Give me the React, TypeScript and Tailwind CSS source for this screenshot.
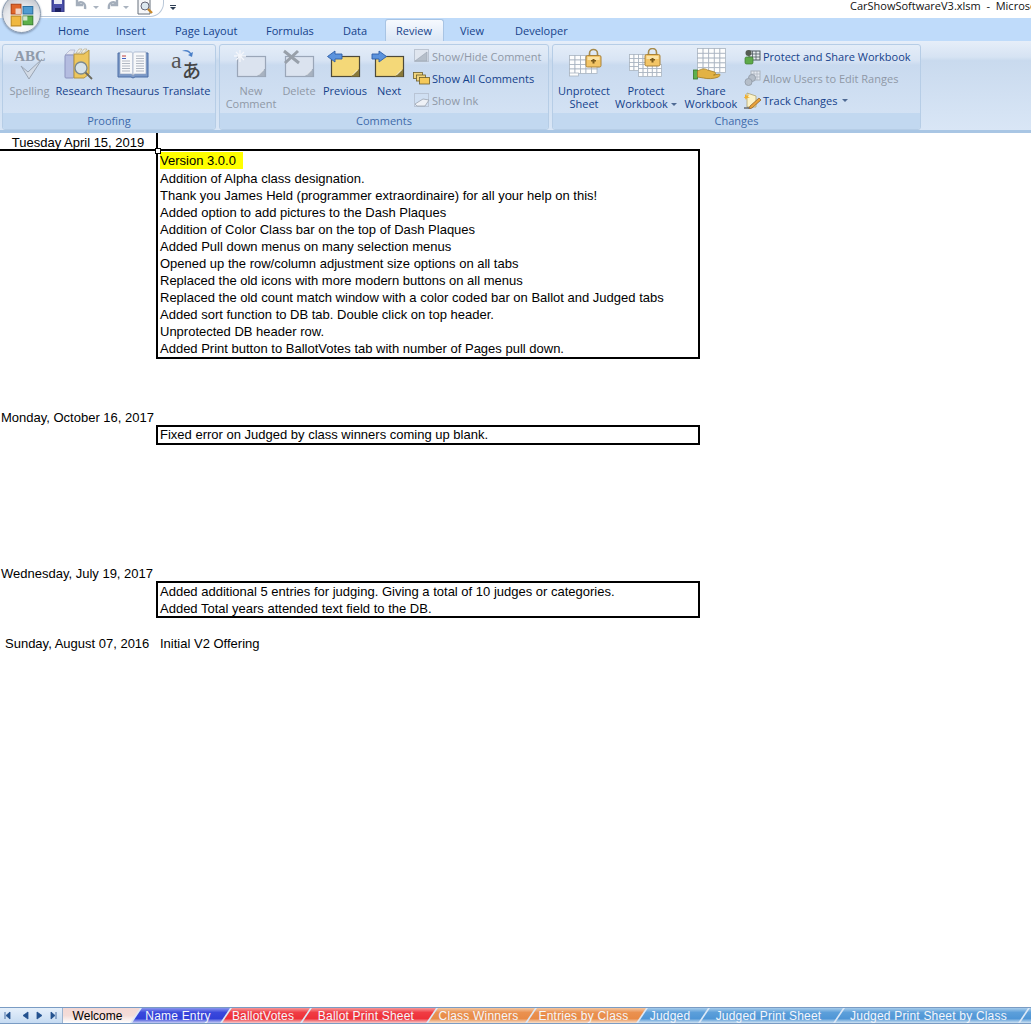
import type { ReactNode } from "react";

const ribbonFont = "font-['Open_Sans','Noto_Sans',sans-serif] text-[11px] leading-[13px]";

function Grid({ x, y, cols, rows, w, h }: { x: number; y: number; cols: number; rows: number; w: number; h: number }) {
  const cells = [];
  for (let r = 0; r < rows; r++) {
    for (let c = 0; c < cols; c++) {
      cells.push(<rect key={r + "-" + c} x={x + c * w + 0.5} y={y + r * h + 0.5} width={w} height={h} fill="#fdfdfd" stroke="#a9b3c0" strokeWidth="0.8" />);
    }
  }
  return <g>{cells}</g>;
}

function Lock({ x, y }: { x: number; y: number }) {
  return (
    <g>
      <path d={`M${x + 3.5} ${y + 6}v-2.5a4 4 0 0 1 8 0v2.5`} fill="none" stroke="#a58a4c" strokeWidth="1.6" />
      <rect x={x} y={y + 5.5} width={15} height={11.5} rx="1.5" fill="#f3c566" stroke="#a9823a" />
      <rect x={x + 1.5} y={y + 7} width={12} height={3} fill="#fbe3a6" />
      <rect x={x + 6.5} y={y + 9} width={2} height={4.5} fill="#7a5a1c" />
      <rect x={x + 5} y={y + 10} width={5} height={1.5} fill="#7a5a1c" />
    </g>
  );
}

function Note({ fill, stroke, fold }: { fill: string; stroke: string; fold: string }) {
  return (
    <g>
      <rect x="4.5" y="8.5" width="28" height="20" fill={fill} stroke={stroke} strokeWidth="1.2" />
      <path d="M32 21v7.5h-8z" fill={fold} stroke={stroke} strokeWidth="0.7" />
      <path d="M25.5 27l5-5" stroke="#f7f7f7" strokeWidth="0.8" />
    </g>
  );
}

function ArrowBlue({ dir }: { dir: "l" | "r" }) {
  return (
    <path
      d={dir === "l" ? "M0.5 8.5L8 3V6H15V11H8V14Z" : "M15.5 8.5L8 3V6H1V11H8V14Z"}
      fill="#5b93dd"
      stroke="#2e5fa8"
      strokeWidth="0.9"
    />
  );
}

const icons: Record<string, ReactNode> = {
  spelling: (
    <svg width="36" height="36" viewBox="0 0 36 36">
      <text x="18" y="13" textAnchor="middle" fontFamily="'Liberation Serif',serif" fontWeight="700" fontSize="15" fill="#8f9aaa">ABC</text>
      <path d="M9 18l7 6L30 11 17 31z" fill="#d3dbe6" stroke="#9aa5b4" strokeWidth="1" />
    </svg>
  ),
  research: (
    <svg width="36" height="36" viewBox="0 0 36 36">
      <path d="M4 7l5-5h5l-2 5z" fill="#e4e6f0" stroke="#9ea4c2" strokeWidth="0.6" />
      <rect x="4" y="7" width="9" height="23" rx="1" fill="#b4bce0" stroke="#8d94bf" />
      <path d="M13 6h10l5-4v24l-5 4H13z" fill="#edc65f" stroke="#b49440" />
      <path d="M15 5l3-4h3l-3 4zM20 5l3-4h3l-3 4z" fill="#f2f0e6" stroke="#a89a70" strokeWidth="0.5" />
      <circle cx="20" cy="20" r="6" fill="#d6e2ea" stroke="#7d8a90" strokeWidth="1.4" />
      <path d="M24.5 24.5l6.5 6.5" stroke="#6c6a60" strokeWidth="1.8" />
    </svg>
  ),
  thesaurus: (
    <svg width="36" height="36" viewBox="0 0 36 36">
      <path d="M3 5h13l2 2 2-2h13v24H20l-2 1-2-1H3z" fill="#7d9ac8" stroke="#4d6ea6" />
      <path d="M5 4h11c1 0 2 1 2 2v22c0-1-1-2-2-2H5z" fill="#f7f8fa" stroke="#8fa0bc" strokeWidth="0.6" />
      <path d="M31 4H20c-1 0-2 1-2 2v22c0-1 1-2 2-2h11z" fill="#f7f8fa" stroke="#8fa0bc" strokeWidth="0.6" />
      <path d="M7 8h4" stroke="#c04040" strokeWidth="1" />
      <path d="M7 10.5h4" stroke="#4060c0" strokeWidth="1" />
      <path d="M7 13h8M7 15.5h8M7 18h8M7 20.5h8M7 23h8M21 8h8M21 10.5h8M21 13h8M21 15.5h8M21 18h8M21 20.5h8M21 23h8" stroke="#a8b0bc" strokeWidth="0.9" />
    </svg>
  ),
  translate: (
    <svg width="36" height="36" viewBox="0 0 36 36">
      <path d="M13 3c4-2 7-1 9 2l2-1-1 5-4-2 2-1c-1-2-4-3-8-3z" fill="#4a7fc8" />
      <text x="2" y="20" fontFamily="'Liberation Serif',serif" fontSize="24" fill="#555">a</text>
      <text x="13" y="30" fontFamily="'Noto Sans CJK JP',sans-serif" fontSize="19" fontWeight="500" fill="#444">あ</text>
    </svg>
  ),
  newComment: (
    <svg width="36" height="36" viewBox="0 0 36 36">
      <Note fill="#dbe3ef" stroke="#9aa6b8" fold="#a8b2c0" />
      <path d="M7 2v12M1 8h12M3 4l8 8M11 4l-8 8" stroke="#f4f6fb" strokeWidth="1.3" />
    </svg>
  ),
  deleteComment: (
    <svg width="36" height="36" viewBox="0 0 36 36">
      <Note fill="#dbe3ef" stroke="#9aa6b8" fold="#a8b2c0" />
      <path d="M3 3l15 12M17 3L4 15" stroke="#98a0aa" strokeWidth="3" />
    </svg>
  ),
  previous: (
    <svg width="36" height="36" viewBox="0 0 36 36">
      <rect x="4.5" y="8.5" width="28" height="20" fill="#f4d878" stroke="#4d4a3a" strokeWidth="1.2" />
      <path d="M32 21v7.5h-8z" fill="#8a7a3a" />
      <path d="M25.5 27l5-5" stroke="#f7f7f7" strokeWidth="0.8" />
      <ArrowBlue dir="l" />
    </svg>
  ),
  next: (
    <svg width="36" height="36" viewBox="0 0 36 36">
      <rect x="4.5" y="8.5" width="28" height="20" fill="#f4d878" stroke="#4d4a3a" strokeWidth="1.2" />
      <path d="M32 21v7.5h-8z" fill="#8a7a3a" />
      <path d="M25.5 27l5-5" stroke="#f7f7f7" strokeWidth="0.8" />
      <ArrowBlue dir="r" />
    </svg>
  ),
  unprotect: (
    <svg width="36" height="36" viewBox="0 0 36 36">
      <Grid x={3} y={7} cols={5} rows={4} w={5.5} h={4.5} />
      <rect x="3.5" y="25" width="9" height="3" fill="#fdfdfd" stroke="#a9b3c0" strokeWidth="0.8" />
      <Lock x={20} y={2} />
    </svg>
  ),
  protect: (
    <svg width="36" height="36" viewBox="0 0 36 36">
      <Grid x={1} y={6} cols={4} rows={4} w={4.5} h={4} />
      <Grid x={10} y={16} cols={5} rows={3} w={4.6} h={4} />
      <Lock x={17} y={1} />
    </svg>
  ),
  share: (
    <svg width="36" height="36" viewBox="0 0 36 36">
      <Grid x={4} y={0} cols={5} rows={5} w={5.6} h={4.8} />
      <rect x="0.5" y="22" width="4" height="9" fill="#5fb04c" stroke="#377a2c" strokeWidth="0.8" />
      <path d="M4.5 23c4-2 7-3 10-1l7 2c2 1 1 3-1 3l6-1c1 1 0 2-1 3-5 2-11 2-15 1l-6-1z" fill="#e2b245" stroke="#a37c22" strokeWidth="0.8" />
    </svg>
  ),
};

const smallIcons: Record<string, ReactNode> = {
  showHide: (
    <svg width="17" height="16" viewBox="0 0 17 16">
      <rect x="1.5" y="1.5" width="14" height="12" fill="#e0e6ef" stroke="#98a2b0" strokeDasharray="1 1" />
      <path d="M2 13L14 4v9z" fill="#b6bfca" stroke="#98a2b0" strokeWidth="0.6" />
    </svg>
  ),
  showAll: (
    <svg width="17" height="16" viewBox="0 0 17 16">
      <rect x="0.5" y="2.5" width="9" height="6" fill="#f2d57d" stroke="#6c5e2c" strokeWidth="0.8" />
      <rect x="3.5" y="5" width="9" height="6" fill="#f2d57d" stroke="#6c5e2c" strokeWidth="0.8" />
      <rect x="6.5" y="7.5" width="10" height="6.5" fill="#f5c95a" stroke="#6c5e2c" strokeWidth="0.8" />
    </svg>
  ),
  showInk: (
    <svg width="17" height="16" viewBox="0 0 17 16">
      <rect x="1.5" y="1.5" width="14" height="13" fill="none" stroke="#a2abb8" strokeDasharray="1 1" />
      <path d="M2 12l8-5 6 1-4 6H4z" fill="#eef1f6" stroke="#9aa3b0" strokeWidth="0.8" />
    </svg>
  ),
  protectShare: (
    <svg width="17" height="17" viewBox="0 0 17 17">
      <rect x="5" y="3" width="11" height="9" fill="#e8edf0" stroke="#4f5b62" />
      <path d="M8.5 3v9M12 3v9M5 6h11M5 9h11" stroke="#4f5b62" strokeWidth="0.8" />
      <circle cx="4.5" cy="5" r="3" fill="#555c52" />
      <rect x="1" y="9" width="8" height="7" rx="1.5" fill="#5eaa4a" stroke="#3a7a2e" strokeWidth="0.7" />
    </svg>
  ),
  allowUsers: (
    <svg width="17" height="17" viewBox="0 0 17 17">
      <rect x="7" y="1" width="9" height="9" fill="#e4e9f0" stroke="#aab2bc" />
      <path d="M10 1v9M13 1v9M7 4h9M7 7h9" stroke="#aab2bc" strokeWidth="0.7" />
      <circle cx="8" cy="8" r="3.5" fill="#b5bec9" stroke="#98a2ae" />
      <circle cx="4.5" cy="12" r="3.5" fill="#b5bec9" stroke="#98a2ae" />
    </svg>
  ),
  track: (
    <svg width="17" height="17" viewBox="0 0 17 17">
      <path d="M3 1l9 3v11H3z" fill="#fbf2c8" stroke="#a89a60" strokeWidth="0.7" />
      <path d="M1 2l2 2 2-2-1 3 2 1-3 0-1 2-1-2-2 0 2-1z" fill="#f0b030" />
      <path d="M6 14l9-8 2 2-9 8-3 1z" fill="#e8a23a" stroke="#8a5a20" strokeWidth="0.7" />
      <path d="M0 16h5" stroke="#333" strokeWidth="1" />
    </svg>
  ),
};

function LargeButton({ icon, label, w, disabled, caret }: { icon: string; label: string[]; w: string; disabled?: boolean; caret?: boolean }) {
  return (
    <div className={`flex flex-col items-center ${w}`}>
      <div className="h-[36px] flex items-start justify-center">{icons[icon]}</div>
      <div className={`text-center whitespace-nowrap ${disabled ? "text-[#8f98a6]" : "text-[#15428b]"}`}>
        {label.map((l, i) => (
          <div key={i}>
            {l}
            {caret && i === label.length - 1 && <span className="inline-block ml-[3px] mb-[2px] border-x-[3px] border-t-[3px] border-x-transparent border-t-[#4f6a94]" />}
          </div>
        ))}
      </div>
    </div>
  );
}

function SmallButton({ icon, label, disabled, caret }: { icon: string; label: string; disabled?: boolean; caret?: boolean }) {
  return (
    <div className={`h-[22px] flex items-center gap-[2px] whitespace-nowrap ${disabled ? "text-[#8f98a6]" : "text-[#15428b]"}`}>
      <span className="w-[17px] h-[17px] flex items-center justify-center">{smallIcons[icon]}</span>
      {label}
      {caret && <span className="inline-block ml-[2px] border-x-[3px] border-t-[3px] border-x-transparent border-t-[#4f6a94]" />}
    </div>
  );
}

function Group({ title, w, children }: { title: string; w: string; children: ReactNode }) {
  return (
    <section className={`${w} h-[86px] flex flex-col rounded-[3px] border border-[#b6cde6] overflow-hidden bg-[linear-gradient(180deg,#e4edf8_0%,#d8e4f4_18%,#c9daef_24%,#d6e4f5_100%)]`}>
      <div className="flex-1 flex pt-[3px] min-h-0">{children}</div>
      <div className="h-[16px] pb-[2px] flex items-center justify-center bg-[#c2d8f0] text-[#3e6aaa]">{title}</div>
    </section>
  );
}

const redTab = "bg-[linear-gradient(180deg,#f79a9a_0%,#f03c44_30%,#ee3038_70%,#f8cccc_100%)]";
const orangeTab = "bg-[linear-gradient(180deg,#f5c9a4_0%,#ea9150_30%,#e88a46_70%,#f8e0cc_100%)]";
const blueTab = "bg-[linear-gradient(180deg,#a8cdec_0%,#5c9fda_30%,#4f96d6_70%,#cfe2f3_100%)]";

const tabs = [
  { name: "Name Entry", w: "w-[98px]", bg: "bg-[linear-gradient(180deg,#8a96ee_0%,#3a48dc_30%,#3040d8_70%,#c8cef5_100%)]" },
  { name: "BallotVotes", w: "w-[88px]", bg: redTab },
  { name: "Ballot Print Sheet", w: "w-[134px]", bg: redTab },
  { name: "Class Winners", w: "w-[107px]", bg: orangeTab },
  { name: "Entries by Class", w: "w-[119px]", bg: orangeTab },
  { name: "Judged", w: "w-[70px]", bg: blueTab },
  { name: "Judged Print Sheet", w: "w-[143px]", bg: blueTab },
  { name: "Judged Print Sheet by Class", w: "w-[193px]", bg: blueTab },
  { name: "", w: "w-[40px]", bg: blueTab },
];

const versionNotes = [
  "Addition of Alpha class designation.",
  "Thank you James Held (programmer extraordinaire) for all your help on this!",
  "Added option to add pictures to the Dash Plaques",
  "Addition of Color Class bar on the top of Dash Plaques",
  "Added Pull down menus on many selection menus",
  "Opened up the row/column adjustment size options on all tabs",
  "Replaced the old icons with more modern buttons on all menus",
  "Replaced the old count match window with a color coded bar on Ballot and Judged tabs",
  "Added sort function to DB tab. Double click on top header.",
  "Unprotected DB header row.",
  "Added Print button to BallotVotes tab with number of Pages pull down.",
];

export default function App() {
  return (
    <div className="relative w-[1031px] h-[1031px] overflow-hidden bg-white flex flex-col text-black font-['Liberation_Sans',Arial,sans-serif] text-[13px]">
      {/* Office button */}
      <div className="absolute left-[2px] top-[-6px] w-[39px] h-[39px] rounded-full border border-[#8a9aae] bg-[radial-gradient(circle_at_50%_80%,#ffffff_0%,#e4e6ea_55%,#a9aeb8_100%)] flex items-center justify-center shadow-[0_1px_2px_#7d93b0] z-10">
        <svg width="28" height="28" viewBox="0 0 26 26">
          <path d="M3 4h9v9H3z" fill="#e0662a" stroke="#b04010" />
          <path d="M14 6h9v7h-9z" fill="#4f9bd0" stroke="#2a6ea0" />
          <path d="M3 15h9v9H3z" fill="#f0b840" stroke="#c08a20" />
          <path d="M14 15h9v8h-9z" fill="#5cb04a" stroke="#3a8030" />
          <path d="M7 8h5v5H7zM14 15h4v4h-4z" fill="#f8f8f8" opacity="0.75" />
        </svg>
      </div>

      {/* Title row */}
      <header className="h-[18px] shrink-0 flex items-center bg-white">
        <div className="ml-[40px] w-[124px] h-[18px] -mt-[3px] rounded-br-[14px] border-r border-b border-[#b9c7d8] flex items-center pl-[11px] overflow-hidden">
          <svg width="14" height="14" viewBox="0 0 14 14" className="shrink-0 -mt-[4px]">
            <path d="M1 0h12v14H1z" fill="#4a4fa8" stroke="#2f3480" />
            <path d="M3 0h8v6H3z" fill="#e8eaf4" />
            <path d="M4 10h6v4H4z" fill="#1d2160" />
          </svg>
          <svg width="16" height="14" viewBox="0 0 16 14" className="shrink-0 ml-[9px] -mt-[4px]">
            <path d="M3 1v6h6M3 7c3-5 9-3 8 4" fill="none" stroke="#a4aebb" strokeWidth="2.4" />
          </svg>
          <span className="shrink-0 ml-[3px] border-x-[3px] border-t-[3px] border-x-transparent border-t-[#aab3bf]" />
          <svg width="16" height="14" viewBox="0 0 16 14" className="shrink-0 ml-[5px] -mt-[4px]">
            <path d="M13 1v6H7M13 7C10 2 4 4 5 11" fill="none" stroke="#a4aebb" strokeWidth="2.4" />
          </svg>
          <span className="shrink-0 ml-[3px] border-x-[3px] border-t-[3px] border-x-transparent border-t-[#aab3bf]" />
          <svg width="18" height="16" viewBox="0 0 18 16" className="shrink-0 ml-[7px]">
            <path d="M2 0h12v15H2z" fill="#f6f7f9" stroke="#66707c" />
            <circle cx="9" cy="7" r="4" fill="#dce8f0" stroke="#667" />
            <path d="M12 10l4 4" stroke="#c8882a" strokeWidth="2.4" />
          </svg>
        </div>
        <div className="ml-[6px] -mt-[3px] flex flex-col items-center gap-[1px]">
          <span className="w-[6px] h-[1px] bg-[#2f3f55]" />
          <span className="border-x-[3px] border-t-[3px] border-x-transparent border-t-[#2f3f55]" />
        </div>
        <div className="ml-auto -mr-[30px] w-[211px] shrink-0 whitespace-pre text-[11px] font-['Open_Sans',sans-serif] -mt-[6px] text-[#111]">CarShowSoftwareV3.xlsm  -  Microsoft Excel</div>
      </header>

      {/* Ribbon tabs */}
      <nav className={`${ribbonFont} h-[23px] shrink-0 bg-[#bfdbfa] flex items-end text-[#15428b]`}>
        <div className="w-[58px]" />
        <div className="w-[58px] pb-[4px]">Home</div>
        <div className="w-[59px] pb-[4px]">Insert</div>
        <div className="w-[91px] pb-[4px]">Page Layout</div>
        <div className="w-[77px] pb-[4px]">Formulas</div>
        <div className="w-[42px] pb-[4px]">Data</div>
        <div className="w-[59px] h-[22px] rounded-t-[3px] border border-b-0 border-[#a8c4e4] bg-[linear-gradient(180deg,#f6f9fe,#dbe7f6)] flex items-center justify-center pr-[1px]">Review</div>
        <div className="w-[16px]" />
        <div className="w-[55px] pb-[4px]">View</div>
        <div className="pb-[4px]">Developer</div>
      </nav>

      {/* Ribbon */}
      <div className={`${ribbonFont} h-[92px] shrink-0 flex gap-[3px] px-[2px] pt-[3px] bg-[linear-gradient(180deg,#e6eef9_0%,#d6e3f3_18%,#c9daee_22%,#d9e6f6_100%)] border-b-[3px] border-[#a9c6e4]`}>
        <Group title="Proofing" w="w-[214px]">
          <div className="w-[2px]" />
          <LargeButton icon="spelling" label={["Spelling"]} w="w-[49px]" disabled />
          <LargeButton icon="research" label={["Research"]} w="w-[50px]" />
          <LargeButton icon="thesaurus" label={["Thesaurus"]} w="w-[57px]" />
          <LargeButton icon="translate" label={["Translate"]} w="w-[51px]" />
        </Group>
        <Group title="Comments" w="w-[330px]">
          <div className="w-[8px]" />
          <LargeButton icon="newComment" label={["New", "Comment"]} w="w-[46px]" disabled />
          <LargeButton icon="deleteComment" label={["Delete"]} w="w-[50px]" disabled />
          <LargeButton icon="previous" label={["Previous"]} w="w-[42px]" />
          <LargeButton icon="next" label={["Next"]} w="w-[46px]" />
          <div className="ml-[1px] -mt-[3px] flex flex-col">
            <SmallButton icon="showHide" label="Show/Hide Comment" disabled />
            <SmallButton icon="showAll" label="Show All Comments" />
            <SmallButton icon="showInk" label="Show Ink" disabled />
          </div>
        </Group>
        <Group title="Changes" w="w-[369px]">
          <div className="w-[3px]" />
          <LargeButton icon="unprotect" label={["Unprotect", "Sheet"]} w="w-[56px]" />
          <LargeButton icon="protect" label={["Protect", "Workbook"]} w="w-[68px]" caret />
          <LargeButton icon="share" label={["Share", "Workbook"]} w="w-[62px]" />
          <div className="ml-[2px] -mt-[3px] flex flex-col">
            <SmallButton icon="protectShare" label="Protect and Share Workbook" />
            <SmallButton icon="allowUsers" label="Allow Users to Edit Ranges" disabled />
            <SmallButton icon="track" label="Track Changes" caret />
          </div>
        </Group>
      </div>

      {/* Sheet */}
      <main className="relative flex-1 min-h-0 leading-[17px]">
        <div className="relative w-[158px] h-[18px] pt-[1px] border-r-2 border-b-2 border-black text-center whitespace-nowrap">Tuesday April 15, 2019</div>
        <div className="relative -mt-[2px] ml-[156px] w-[544px] h-[210px] border-2 border-black pl-[2px]">
          <span className="absolute left-[-3px] top-[-3px] w-[6px] h-[6px] bg-white border border-black" />
          <div className="w-[84px] h-[19px] pt-[1px] -ml-[1px] pl-[1px]">
            <div className="bg-[#ffff00] h-[17px]">Version 3.0.0</div>
          </div>
          {versionNotes.map((n) => (
            <div key={n} className="h-[17.05px] whitespace-nowrap">{n}</div>
          ))}
        </div>

        <div className="mt-[50px] w-[156px] pl-[1px] h-[16px] whitespace-nowrap">Monday, October 16, 2017</div>
        <div className="ml-[156px] w-[544px] border-2 border-black pl-[2px] h-[20px] leading-[16px] whitespace-nowrap">Fixed error on Judged by class winners coming up blank.</div>

        <div className="mt-[119px] w-[156px] pl-[1px] pt-[1px] h-[17px] whitespace-nowrap">Wednesday, July 19, 2017</div>
        <div className="ml-[156px] w-[544px] h-[37px] border-2 border-black pl-[2px] whitespace-nowrap">
          <div>Added additional 5 entries for judging. Giving a total of 10 judges or categories.</div>
          <div>Added Total years attended text field to the DB.</div>
        </div>

        <div className="mt-[17px] flex h-[17px] whitespace-nowrap">
          <div className="w-[160px] pl-[5px]">Sunday, August 07, 2016</div>
          <div>Initial V2 Offering</div>
        </div>
      </main>

      {/* Sheet tabs */}
      <footer className="h-[17px] mb-[7px] shrink-0 flex text-[12px] border-t border-b border-[#7a9cc4] bg-[#dce8f6] overflow-hidden">
        <div className="w-[62px] shrink-0 flex items-center bg-[linear-gradient(180deg,#e6f0fb,#c6dbf2)] text-[#23528f]">
          <svg width="58" height="15" viewBox="0 0 58 15">
            <path d="M5 4v7M10 4L6 7.5 10 11zM28 4l-5 3.5 5 3.5zM37 4l5 3.5-5 3.5zM51 4l4 3.5-4 3.5zM56 4v7" fill="currentColor" stroke="currentColor" strokeWidth="0.8" />
          </svg>
        </div>
        <div className="shrink-0 w-[78px] flex items-center justify-center pr-[8px] border-l border-[#9db4cf] bg-[linear-gradient(180deg,#f4d8d4_0%,#f4dcd8_50%,#ffffff_100%)] [clip-path:polygon(0_0,100%_0,calc(100%-10px)_100%,0_100%)]">Welcome</div>
        {tabs.map((t) => (
          <div key={t.name} className={`${t.w} ${t.bg} -ml-[8px] shrink-0 flex items-center justify-center pr-[8px] pl-[2px] tracking-[0.2px] text-[#f4f6fb] whitespace-nowrap [clip-path:polygon(10px_0,100%_0,calc(100%-10px)_100%,0_100%)]`}>
            {t.name}
          </div>
        ))}
      </footer>
    </div>
  );
}
